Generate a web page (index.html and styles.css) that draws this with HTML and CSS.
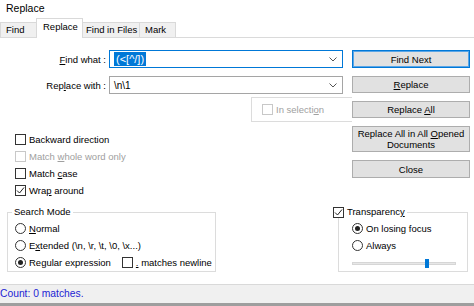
FILE: index.html
```html
<!DOCTYPE html>
<html lang="en">

<head>
    <meta charset="UTF-8" />
    <title>Replace</title>
    <link rel="stylesheet" href="styles.css">
</head>

<body>
    <div class="dialog">
        <div class="title">Replace</div>

        <!-- Tab strip -->
        <div class="tabs">
            <div class="tab tab-find">Find</div>
            <div class="tab tab-replace active">Replace</div>
            <div class="tab tab-files">Find in Files</div>
            <div class="tab tab-mark">Mark</div>
        </div>

        <div class="panel">
            <div class="main">
                <div class="left">
                    <div class="field">
                        <label><u>F</u>ind what :</label>
                        <div class="combo focus">
                            <span class="sel">(&lt;[^/])</span>
                            <svg class="arrow" width="8" height="5" viewBox="0 0 8 5"><polyline points="0.5,0.5 4,4 7.5,0.5" fill="none" stroke="#555" /></svg>
                        </div>
                    </div>
                    <div class="field">
                        <label>Rep<u>l</u>ace with :</label>
                        <div class="combo">
                            <span class="val">\n\1</span>
                            <svg class="arrow" width="8" height="5" viewBox="0 0 8 5"><polyline points="0.5,0.5 4,4 7.5,0.5" fill="none" stroke="#555" /></svg>
                        </div>
                    </div>

                    <div class="insel">
                        <span class="chk disabled"></span><span>In selecti<u>o</u>n</span>
                    </div>

                    <!-- Search options -->
                    <div class="options">
                        <div class="opt"><span class="chk"></span><span>Backward direction</span></div>
                        <div class="opt disabled-text"><span class="chk disabled"></span><span>Match <u>w</u>hole word only</span></div>
                        <div class="opt"><span class="chk"></span><span>Match <u>c</u>ase</span></div>
                        <div class="opt">
                            <span class="chk"><svg width="9" height="9" viewBox="0 0 9 9"><polyline points="1,4.5 3.5,7 8,1.5" fill="none" stroke="#222" stroke-width="1" /></svg></span><span>Wra<u>p</u> around</span>
                        </div>
                    </div>
                </div>

                <!-- Action buttons -->
                <div class="buttons">
                    <button class="btn default">Find Next</button>
                    <button class="btn"><u>R</u>eplace</button>
                    <button class="btn">Replace <u>A</u>ll</button>
                    <button class="btn tall">Replace All in All <u>O</u>pened<br>Documents</button>
                    <button class="btn">Close</button>
                </div>
            </div>

            <div class="bottom">
                <fieldset class="group mode">
                    <legend>Search Mode</legend>
                    <div class="row"><span class="radio"></span><span><u>N</u>ormal</span></div>
                    <div class="row"><span class="radio"></span><span>E<u>x</u>tended (\n, \r, \t, \0, \x...)</span></div>
                    <div class="row">
                        <span class="radio on"></span><span>Regular expression</span>
                        <span class="chk newline"></span><span><u>.</u> matches newline</span>
                    </div>
                </fieldset>

                <fieldset class="group trans">
                    <legend>
                        <span class="chk"><svg width="9" height="9" viewBox="0 0 9 9"><polyline points="1,4.5 3.5,7 8,1.5" fill="none" stroke="#222" stroke-width="1" /></svg></span><span>Transparenc<u>y</u></span>
                    </legend>
                    <div class="row"><span class="radio on"></span><span>On losing focus</span></div>
                    <div class="row"><span class="radio"></span><span>Always</span></div>
                    <div class="row">
                        <div class="slider"><span class="thumb"></span></div>
                    </div>
                </fieldset>
            </div>
        </div>

        <div class="status">Count: 0 matches.</div>
        <div class="strip"></div>
    </div>
</body>

</html>
```

FILE: styles.css
```css
/* General styling */
* {
    box-sizing: border-box;
}

body {
    margin: 0;
    font-family: "Liberation Sans", Arial, sans-serif;
    font-size: 9.5px;
    color: #000;
    background-color: #fff;
}

.dialog {
    width: 474px;
    height: 306px;
    display: flex;
    flex-direction: column;
    overflow: hidden;
}

.title {
    height: 18px;
    padding: 2px 0 0 6px;
    font-size: 10.5px;
    line-height: 12px;
}

/* Tabs */
.tabs {
    display: flex;
    align-items: flex-end;
    height: 20px;
    border-bottom: 1px solid #dadada;
}

.tab {
    height: 15px;
    padding: 1px 0 0 5px;
    line-height: 12px;
    white-space: nowrap;
    border: 1px solid #d9d9d9;
    border-bottom: none;
    background-color: #f0f0f0;
    margin-left: -1px;
}

.tab-find {
    width: 37px;
    margin-left: 0;
}

.tab-replace {
    width: 47px;
}

.tab-files {
    width: 58px;
    padding-left: 3px;
}

.tab-mark {
    width: 37px;
}

.tab.active {
    height: 20px;
    margin-bottom: -1px;
    padding-top: 2px;
    padding-left: 6px;
    background-color: #fff;
    position: relative;
    z-index: 1;
}

/* Main panel */
.panel {
    flex: 1;
    padding-top: 12px;
}

.main {
    display: flex;
}

.left {
    width: 352px;
}

.field {
    display: flex;
    align-items: center;
    height: 18px;
    margin-bottom: 8px;
}

.field label {
    width: 106px;
    text-align: right;
}

.combo {
    width: 234px;
    height: 18px;
    margin-left: 3px;
    border: 1px solid #a5a5a5;
    display: flex;
    align-items: center;
    justify-content: space-between;
    padding: 0 5px 0 4px;
    font-size: 10px;
}

.combo.focus {
    border-color: #0078d7;
}

.sel {
    background-color: #0078d7;
    color: #fff;
    padding: 1px 2px;
    line-height: 12px;
    font-size: 11px;
}

.insel {
    margin-left: 251px;
    margin-top: -5px;
    height: 25px;
    border: 1px solid #dcdcdc;
    border-right: none;
    display: flex;
    align-items: center;
    gap: 3px;
    padding-left: 10px;
    color: #a0a0a0;
}

.options {
    margin-top: 9px;
    padding-left: 15px;
}

.opt {
    height: 17px;
    display: flex;
    align-items: center;
    gap: 3px;
}

.disabled-text {
    color: #a0a0a0;
}

/* Check boxes and radios */
.chk {
    width: 11px;
    height: 11px;
    border: 1px solid #333;
    background-color: #fff;
    flex-shrink: 0;
    display: flex;
    align-items: center;
    justify-content: center;
}

.chk.disabled {
    border-color: #c8c8c8;
}

.radio {
    width: 11px;
    height: 11px;
    border: 1px solid #333;
    border-radius: 50%;
    flex-shrink: 0;
    display: flex;
    align-items: center;
    justify-content: center;
}

.radio.on::after {
    content: "";
    width: 5px;
    height: 5px;
    border-radius: 50%;
    background-color: #222;
}

/* Buttons */
.buttons {
    width: 118px;
    display: flex;
    flex-direction: column;
    gap: 8px;
}

.btn {
    height: 17px;
    padding: 0;
    font-family: inherit;
    font-size: 9.5px;
    line-height: 11px;
    color: #000;
    background-color: #e1e1e1;
    border: 1px solid #adadad;
}

.btn.default {
    height: 18px;
    border-color: #0078d7;
    box-shadow: inset 0 0 0 1px #5aa5e6;
}

.btn.tall {
    height: 26px;
}

.btn:last-child {
    height: 18px;
}

/* Bottom group boxes */
.bottom {
    display: flex;
    gap: 122px;
    padding-left: 7px;
    margin-top: 7px;
}

.group {
    margin: 0;
    padding: 2px 0 0 7px;
    border: 1px solid #dcdcdc;
    min-width: 0;
}

.group legend {
    padding: 0 2px;
    line-height: 12px;
    margin-left: -3px;
}

.mode {
    width: 209px;
}

.trans {
    width: 130px;
    padding-left: 13px;
}

.trans legend {
    display: flex;
    align-items: center;
    gap: 3px;
    margin-left: -19px;
    padding: 0 2px 0 0;
}

.row {
    height: 17px;
    display: flex;
    align-items: center;
    gap: 3px;
}

.chk.newline {
    margin-left: 8px;
}

.slider {
    width: 104px;
    height: 3px;
    background-color: #e7e7e7;
    border: 1px solid #d6d6d6;
    position: relative;
    margin-top: 2px;
}

.thumb {
    position: absolute;
    left: 72px;
    top: -4px;
    width: 4px;
    height: 9px;
    background-color: #0078d7;
}

/* Status bar */
.status {
    height: 19px;
    border-top: 1px solid #d9d9d9;
    background-color: #f0f0f0;
    color: #2424d4;
    font-size: 10.3px;
    line-height: 18px;
}

.strip {
    height: 3px;
    background-color: #9e9e9e;
}
```
